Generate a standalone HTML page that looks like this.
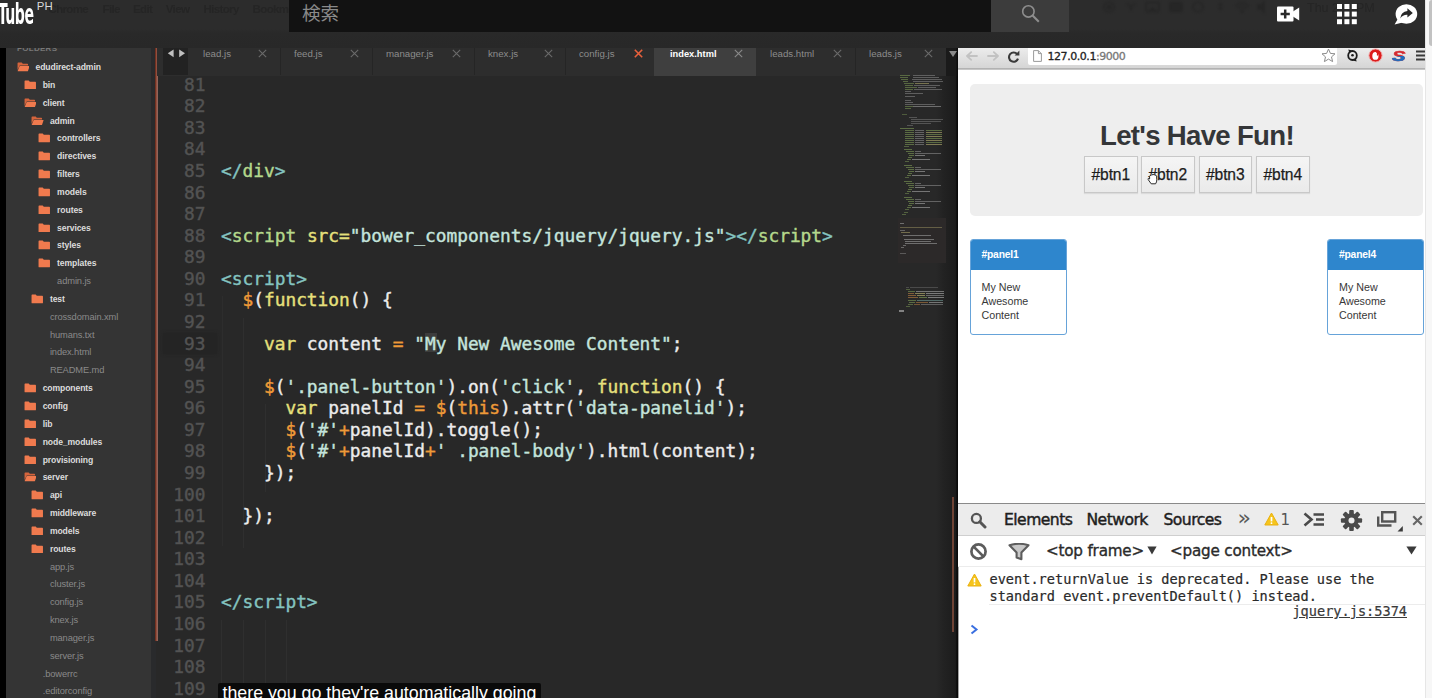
<!DOCTYPE html>
<html lang="ja">
<head>
<meta charset="utf-8">
<title>YouTube</title>
<style>
*{box-sizing:border-box;margin:0;padding:0}
html,body{width:1432px;height:698px;overflow:hidden;background:#282828}
body{position:relative;font-family:"Liberation Sans","Noto Sans CJK JP",sans-serif}
.abs{position:absolute}
/* ---------- video: editor ---------- */
#leftblack{position:absolute;left:0;top:48px;width:6px;height:650px;background:#000}
#sidebar{position:absolute;left:6px;top:48px;width:145px;height:650px;background:#343434}
#sbgap{position:absolute;left:150.6px;top:48px;width:5px;height:650px;background:#292a2c}
#oline{position:absolute;left:154.6px;top:48px;width:3.4px;height:593px;background:linear-gradient(to right,#5e2819,#8a3c2a 40%,#98655a 62%,#8d625a)}
#editor{position:absolute;left:157px;top:48px;width:789px;height:650px;background:#282828}
#edgap{position:absolute;left:936px;top:75px;width:22.4px;height:623px;background:linear-gradient(to right,#282828 0,#222 35%,#1e1e1e 70%,#1c1c1c 88%,#0c0c0c 95%,#080808 100%)}
#edgap2{position:absolute;left:946px;top:48px;width:12.4px;height:27.5px;background:linear-gradient(to right,#1a1a1a 0,#1a1a1a 80%,#080808 100%)}
#oline2{position:absolute;left:951.5px;top:497px;width:2px;height:135px;background:#6e4335}
.fi{position:absolute}
.sd,.sf{position:absolute;font-family:"Liberation Sans",sans-serif;font-size:8.6px;line-height:14px;white-space:nowrap;letter-spacing:-0.1px}
.sd{color:#dcdcdc;font-weight:bold}
.sf{color:#8a8a8a;font-size:9.3px}
#folders{position:absolute;left:17px;top:43.6px;font-size:8px;line-height:10px;color:#777;letter-spacing:.3px;font-weight:bold}
/* tabs */
#tabbar{position:absolute;left:157px;top:48px;width:789px;height:27.5px;background:#2d2d2d}
.tab{position:absolute;top:47px;font-size:9.7px;line-height:14px;color:#8c8c8c;white-space:nowrap;font-family:"Liberation Sans",sans-serif}
.tab.act{color:#fff;font-weight:bold;font-size:9.3px}
.tx{position:absolute}
#tabact{position:absolute;left:654px;top:48px;width:102px;height:27.5px;background:#3f3f3f}
#tabarrows{position:absolute;left:163px;top:48px;width:25px;height:27px;background:#222}
/* code */
.ln,.cl{position:absolute;-webkit-text-stroke:0.4px;font-family:"DejaVu Sans Mono","Liberation Mono",monospace;font-size:17.84px;line-height:21.57px;white-space:pre;height:21.57px}
.ln{left:157px;width:48.5px;text-align:right;color:#535353}
.cl{left:221px;color:#e6e6e6}
.t{color:#84c4c0}.g{color:#b4d88c}.c{color:#a8d4d0}.y{color:#e6e07c}.o{color:#ee9a38}.w{color:#ececec}.s{color:#c4e4dc}
#curline{position:absolute;left:163px;top:333px;width:54px;height:21px;background:#242424;box-shadow:0 0 3px #242424}
#cursor{position:absolute;left:424.5px;top:333px;width:12px;height:19px;background:#3c3c3c}
.guide{position:absolute;width:1px;background:rgba(255,255,255,.035)}
#minimap{position:absolute;left:0;top:0;filter:blur(.45px)}
#minimap i{position:absolute;display:block;height:1.1px}
#mmview{position:absolute;left:898px;top:218px;width:48px;height:45px;background:#2c2929}
#caption{position:absolute;left:218px;top:683.4px;height:20px;padding:0 4.5px;background:#0a0a0a;color:#fff;font-size:17.8px;line-height:21.4px;white-space:nowrap;border-radius:2px;font-family:"Liberation Sans",sans-serif}
/* ---------- video: browser ---------- */
#browser{position:absolute;left:958px;top:48px;width:467px;height:650px;background:#fff}
#ctool{position:absolute;left:958px;top:48px;width:467px;height:21px;background:linear-gradient(#ececec,#d4d4d4)}
#ctoolb{position:absolute;left:958px;top:68px;width:467px;height:2px;background:linear-gradient(#a8a8a8,#d0d0d0)}
#urlbox{position:absolute;left:1028px;top:48px;width:309px;height:16.6px;background:#fff;border-radius:0 0 2px 2px}
#url{position:absolute;left:1047.5px;top:48.8px;font-family:"DejaVu Sans","Liberation Sans",sans-serif;font-size:11px;line-height:16px;color:#222;white-space:nowrap;letter-spacing:-0.45px;-webkit-text-stroke:0.3px}
#url span{color:#777}
#jumbo{position:absolute;left:970px;top:84px;width:453.2px;height:132px;background:#eeeeee;border-radius:5px}
#h1{position:absolute;left:970px;top:118.6px;width:454px;text-align:center;font-size:27.6px;line-height:34px;font-weight:bold;color:#343638;font-family:"Liberation Sans",sans-serif;white-space:nowrap;letter-spacing:-0.7px}
.btn{position:absolute;top:156px;width:53.500px;height:37px;border:1px solid #c8c8c8;background:#efefef;font-size:15.6px;line-height:35px;text-align:center;color:#1c1c1c;letter-spacing:-0.1px;-webkit-text-stroke:.25px;background:linear-gradient(#f5f5f5,#eaeaea);box-shadow:0 1px 1px rgba(0,0,0,.08);font-family:"Liberation Sans",sans-serif;white-space:nowrap}
.panel{position:absolute;top:238.5px;width:97px;height:96.6px;border:1px solid #66a3d9;border-radius:3px;background:#fff;overflow:hidden}
.ph{position:absolute;left:0;top:0;width:100%;height:30px;background:#2e86cd}
.pt{position:absolute;left:11px;top:9px;font-size:10.3px;line-height:12px;font-weight:bold;color:#fff;font-family:"Liberation Sans",sans-serif;letter-spacing:-0.2px}
.pb{position:absolute;left:11px;top:40.5px;font-size:10.7px;line-height:14.1px;color:#383838;font-family:"Liberation Sans",sans-serif}
/* devtools */
#dtline{position:absolute;left:958px;top:503px;width:467px;height:1px;background:#8a8a8a}
#dtbar{position:absolute;left:958px;top:504px;width:467px;height:32px;background:#ececec;border-bottom:1px solid #cfcfcf}
.dtt{position:absolute;top:509px;font-family:"DejaVu Sans","Liberation Sans",sans-serif;font-size:15.6px;line-height:22px;color:#1e1e1e;white-space:nowrap;letter-spacing:-0.55px;-webkit-text-stroke:0.45px}
#dtfilter{position:absolute;left:958px;top:536px;width:467px;height:30.5px;background:#fff;border-bottom:1px solid #ececec}
.dtf{position:absolute;top:540px;font-family:"DejaVu Sans","Liberation Sans",sans-serif;font-size:15.2px;line-height:22px;color:#2a2a2a;white-space:nowrap;letter-spacing:-0.2px;-webkit-text-stroke:0.35px}
.cm{-webkit-text-stroke:.2px;position:absolute;left:989.5px;font-family:"DejaVu Sans Mono","Liberation Mono",monospace;font-size:13.6px;line-height:16.5px;color:#2a2a2a;white-space:pre}
#cmsep{position:absolute;left:989px;top:604px;width:436px;height:1px;background:#ececec}
#vscroll{position:absolute;left:1425px;top:0;width:7px;height:698px;background:#f7f7f7;border-left:1px solid #e6e6e6}
#vthumb{position:absolute;left:1429px;top:0;width:3px;height:46px;background:#c2c2c2;border-radius:3px 0 0 3px}
/* ---------- youtube header ---------- */
#yth{position:absolute;left:0;top:0;width:1425px;height:48px;background:linear-gradient(#2c2c2c 0,#2c2c2c 29px,#292929 33px,#282828 48px)}
#ytsearch{position:absolute;left:289px;top:0;width:702px;height:32px;background:#121212}
#ytsbtn{position:absolute;left:991px;top:0;width:78px;height:32px;background:#3c3c3c}
#ytph{position:absolute;left:36.8px;top:0.2px;font-size:11.4px;line-height:12px;color:#d8d8d8;font-family:"Liberation Sans",sans-serif}
#yttube{position:absolute;left:-2px;top:-2.2px;font-family:"DejaVu Sans Condensed","DejaVu Sans","Liberation Sans",sans-serif;font-weight:bold;font-size:29px;line-height:32px;color:#fff;transform:scaleX(.54);transform-origin:0 0;white-space:nowrap;letter-spacing:-1px}
#ytq{position:absolute;left:302px;top:2px;font-size:18.6px;line-height:24px;color:#8a8a8a;font-family:"Liberation Sans","Noto Sans CJK JP",sans-serif;white-space:nowrap}
.ghost{position:absolute;top:1.5px;font-size:11.6px;line-height:14px;letter-spacing:-0.7px;color:#252525;filter:blur(.7px);font-family:"Liberation Sans",sans-serif;font-weight:bold;white-space:nowrap}
</style>
</head>
<body>
<svg width="0" height="0" style="position:absolute">
<defs>
<g id="fc"><path d="M0.6 1.4Q0.6 0.6 1.4 0.6H5.2L6.4 2H12.4Q13.2 2 13.2 2.8V9.8Q13.2 10.6 12.4 10.6H1.4Q0.6 10.6 0.6 9.8Z" fill="#f07a4e"/></g>
<g id="fo"><path d="M0.6 1.4Q0.6 0.6 1.4 0.6H5.2L6.4 2H11.4Q12.2 2 12.2 2.8V4H3L0.6 9Z" fill="#d5643c"/><path d="M3 4.6H13.6Q14 4.6 13.8 5.2L12.2 10Q12 10.6 11.4 10.6H1.2Q0.5 10.6 0.8 10Z" fill="#f07a4e"/></g>
</defs>
</svg>

<!-- ================= EDITOR (video) ================= -->
<div id="leftblack"></div>
<div id="sidebar"></div>
<div id="sbgap"></div>
<div id="editor"></div>
<div id="oline"></div>
<div id="edgap"></div>
<div id="oline2"></div>
<div id="folders">FOLDERS</div>
<svg class="fi" style="left:16.6px;top:62.0px" width="12.7" height="9.7" viewBox="0 0 14 11" preserveAspectRatio="none"><use href="#fo"/></svg>
<div class="sd" style="left:35.5px;top:60.0px">edudirect-admin</div>
<svg class="fi" style="left:23.8px;top:79.8px" width="12.7" height="9.7" viewBox="0 0 14 11" preserveAspectRatio="none"><use href="#fc"/></svg>
<div class="sd" style="left:42.7px;top:77.8px">bin</div>
<svg class="fi" style="left:23.8px;top:97.7px" width="12.7" height="9.7" viewBox="0 0 14 11" preserveAspectRatio="none"><use href="#fo"/></svg>
<div class="sd" style="left:42.7px;top:95.7px">client</div>
<svg class="fi" style="left:31.0px;top:115.5px" width="12.7" height="9.7" viewBox="0 0 14 11" preserveAspectRatio="none"><use href="#fo"/></svg>
<div class="sd" style="left:49.9px;top:113.5px">admin</div>
<svg class="fi" style="left:38.2px;top:133.4px" width="12.7" height="9.7" viewBox="0 0 14 11" preserveAspectRatio="none"><use href="#fc"/></svg>
<div class="sd" style="left:57.1px;top:131.4px">controllers</div>
<svg class="fi" style="left:38.2px;top:151.2px" width="12.7" height="9.7" viewBox="0 0 14 11" preserveAspectRatio="none"><use href="#fc"/></svg>
<div class="sd" style="left:57.1px;top:149.2px">directives</div>
<svg class="fi" style="left:38.2px;top:169.0px" width="12.7" height="9.7" viewBox="0 0 14 11" preserveAspectRatio="none"><use href="#fc"/></svg>
<div class="sd" style="left:57.1px;top:167.0px">filters</div>
<svg class="fi" style="left:38.2px;top:186.9px" width="12.7" height="9.7" viewBox="0 0 14 11" preserveAspectRatio="none"><use href="#fc"/></svg>
<div class="sd" style="left:57.1px;top:184.9px">models</div>
<svg class="fi" style="left:38.2px;top:204.7px" width="12.7" height="9.7" viewBox="0 0 14 11" preserveAspectRatio="none"><use href="#fc"/></svg>
<div class="sd" style="left:57.1px;top:202.7px">routes</div>
<svg class="fi" style="left:38.2px;top:222.6px" width="12.7" height="9.7" viewBox="0 0 14 11" preserveAspectRatio="none"><use href="#fc"/></svg>
<div class="sd" style="left:57.1px;top:220.6px">services</div>
<svg class="fi" style="left:38.2px;top:240.4px" width="12.7" height="9.7" viewBox="0 0 14 11" preserveAspectRatio="none"><use href="#fc"/></svg>
<div class="sd" style="left:57.1px;top:238.4px">styles</div>
<svg class="fi" style="left:38.2px;top:258.2px" width="12.7" height="9.7" viewBox="0 0 14 11" preserveAspectRatio="none"><use href="#fc"/></svg>
<div class="sd" style="left:57.1px;top:256.2px">templates</div>
<div class="sf" style="left:57.1px;top:274.1px">admin.js</div>
<svg class="fi" style="left:31.0px;top:293.9px" width="12.7" height="9.7" viewBox="0 0 14 11" preserveAspectRatio="none"><use href="#fc"/></svg>
<div class="sd" style="left:49.9px;top:291.9px">test</div>
<div class="sf" style="left:49.9px;top:309.8px">crossdomain.xml</div>
<div class="sf" style="left:49.9px;top:327.6px">humans.txt</div>
<div class="sf" style="left:49.9px;top:345.4px">index.html</div>
<div class="sf" style="left:49.9px;top:363.3px">README.md</div>
<svg class="fi" style="left:23.8px;top:383.1px" width="12.7" height="9.7" viewBox="0 0 14 11" preserveAspectRatio="none"><use href="#fc"/></svg>
<div class="sd" style="left:42.7px;top:381.1px">components</div>
<svg class="fi" style="left:23.8px;top:401.0px" width="12.7" height="9.7" viewBox="0 0 14 11" preserveAspectRatio="none"><use href="#fc"/></svg>
<div class="sd" style="left:42.7px;top:399.0px">config</div>
<svg class="fi" style="left:23.8px;top:418.8px" width="12.7" height="9.7" viewBox="0 0 14 11" preserveAspectRatio="none"><use href="#fc"/></svg>
<div class="sd" style="left:42.7px;top:416.8px">lib</div>
<svg class="fi" style="left:23.8px;top:436.6px" width="12.7" height="9.7" viewBox="0 0 14 11" preserveAspectRatio="none"><use href="#fc"/></svg>
<div class="sd" style="left:42.7px;top:434.6px">node_modules</div>
<svg class="fi" style="left:23.8px;top:454.5px" width="12.7" height="9.7" viewBox="0 0 14 11" preserveAspectRatio="none"><use href="#fc"/></svg>
<div class="sd" style="left:42.7px;top:452.5px">provisioning</div>
<svg class="fi" style="left:23.8px;top:472.3px" width="12.7" height="9.7" viewBox="0 0 14 11" preserveAspectRatio="none"><use href="#fo"/></svg>
<div class="sd" style="left:42.7px;top:470.3px">server</div>
<svg class="fi" style="left:31.0px;top:490.2px" width="12.7" height="9.7" viewBox="0 0 14 11" preserveAspectRatio="none"><use href="#fc"/></svg>
<div class="sd" style="left:49.9px;top:488.2px">api</div>
<svg class="fi" style="left:31.0px;top:508.0px" width="12.7" height="9.7" viewBox="0 0 14 11" preserveAspectRatio="none"><use href="#fc"/></svg>
<div class="sd" style="left:49.9px;top:506.0px">middleware</div>
<svg class="fi" style="left:31.0px;top:525.8px" width="12.7" height="9.7" viewBox="0 0 14 11" preserveAspectRatio="none"><use href="#fc"/></svg>
<div class="sd" style="left:49.9px;top:523.8px">models</div>
<svg class="fi" style="left:31.0px;top:543.7px" width="12.7" height="9.7" viewBox="0 0 14 11" preserveAspectRatio="none"><use href="#fc"/></svg>
<div class="sd" style="left:49.9px;top:541.7px">routes</div>
<div class="sf" style="left:49.9px;top:559.5px">app.js</div>
<div class="sf" style="left:49.9px;top:577.4px">cluster.js</div>
<div class="sf" style="left:49.9px;top:595.2px">config.js</div>
<div class="sf" style="left:49.9px;top:613.0px">knex.js</div>
<div class="sf" style="left:49.9px;top:630.9px">manager.js</div>
<div class="sf" style="left:49.9px;top:648.7px">server.js</div>
<div class="sf" style="left:42.7px;top:666.6px">.bowerrc</div>
<div class="sf" style="left:42.7px;top:684.4px">.editorconfig</div>

<div id="tabbar"></div>
<div id="tabact"></div>
<div class="abs" style="left:280px;top:48px;width:1px;height:27px;background:#252525"></div><div class="abs" style="left:372px;top:48px;width:1px;height:27px;background:#252525"></div><div class="abs" style="left:474px;top:48px;width:1px;height:27px;background:#252525"></div><div class="abs" style="left:565px;top:48px;width:1px;height:27px;background:#252525"></div><div class="abs" style="left:855px;top:48px;width:1px;height:27px;background:#252525"></div>
<div id="tabarrows"></div>
<svg class="abs" style="left:166.5px;top:49px" width="19" height="9" viewBox="0 0 19 9"><path d="M6.6 0.4V8.2L0.8 4.3Z" fill="#c0c0c0"/><path d="M12.2 0.4V8.2L18 4.3Z" fill="#c0c0c0"/></svg>
<div class="tab" style="left:203px">lead.js</div>
<svg class="tx" style="left:257.5px;top:49.3px" width="9" height="9" viewBox="0 0 9 9"><path d="M0.8 0.8L8.2 8.2M8.2 0.8L0.8 8.2" stroke="#6a6a6a" stroke-width="1.1" fill="none"/></svg>
<div class="tab" style="left:294px">feed.js</div>
<svg class="tx" style="left:349.5px;top:49.3px" width="9" height="9" viewBox="0 0 9 9"><path d="M0.8 0.8L8.2 8.2M8.2 0.8L0.8 8.2" stroke="#6a6a6a" stroke-width="1.1" fill="none"/></svg>
<div class="tab" style="left:386px">manager.js</div>
<svg class="tx" style="left:451.5px;top:49.3px" width="9" height="9" viewBox="0 0 9 9"><path d="M0.8 0.8L8.2 8.2M8.2 0.8L0.8 8.2" stroke="#6a6a6a" stroke-width="1.1" fill="none"/></svg>
<div class="tab" style="left:488px">knex.js</div>
<svg class="tx" style="left:543.5px;top:49.3px" width="9" height="9" viewBox="0 0 9 9"><path d="M0.8 0.8L8.2 8.2M8.2 0.8L0.8 8.2" stroke="#6a6a6a" stroke-width="1.1" fill="none"/></svg>
<div class="tab" style="left:579px">config.js</div>
<svg class="tx" style="left:633.5px;top:49.3px" width="9" height="9" viewBox="0 0 9 9"><path d="M0.8 0.8L8.2 8.2M8.2 0.8L0.8 8.2" stroke="#e8603c" stroke-width="1.6" fill="none"/></svg>
<div class="tab act" style="left:670px">index.html</div>
<svg class="tx" style="left:733.5px;top:49.3px" width="9" height="9" viewBox="0 0 9 9"><path d="M0.8 0.8L8.2 8.2M8.2 0.8L0.8 8.2" stroke="#8a8a8a" stroke-width="1.1" fill="none"/></svg>
<div class="tab" style="left:770px">leads.html</div>
<svg class="tx" style="left:832.5px;top:49.3px" width="9" height="9" viewBox="0 0 9 9"><path d="M0.8 0.8L8.2 8.2M8.2 0.8L0.8 8.2" stroke="#6a6a6a" stroke-width="1.1" fill="none"/></svg>
<div class="tab" style="left:869px">leads.js</div>
<svg class="tx" style="left:923.5px;top:49.3px" width="9" height="9" viewBox="0 0 9 9"><path d="M0.8 0.8L8.2 8.2M8.2 0.8L0.8 8.2" stroke="#6a6a6a" stroke-width="1.1" fill="none"/></svg>
<div id="edgap2"></div>
<svg class="abs" style="left:947.5px;top:50px" width="10" height="8" viewBox="0 0 10 8"><path d="M1 1H9L5 7Z" fill="#8a8a8a"/></svg>

<div id="curline"></div>
<div id="cursor"></div>
<div class="guide" style="left:222px;top:296px;height:250px;opacity:.7"></div>
<div class="guide" style="left:243px;top:318px;height:230px"></div>
<div class="guide" style="left:265px;top:404px;height:88px"></div>
<div class="guide" style="left:221px;top:620px;height:78px"></div>
<div class="guide" style="left:243px;top:620px;height:78px"></div>
<div class="guide" style="left:265px;top:620px;height:78px"></div>
<div class="guide" style="left:286px;top:620px;height:78px"></div>
<div class="ln" style="top:73.70px">81</div>
<div class="ln" style="top:95.27px">82</div>
<div class="ln" style="top:116.84px">83</div>
<div class="ln" style="top:138.41px">84</div>
<div class="ln" style="top:159.98px">85</div>
<div class="cl" style="top:159.98px"><span class="t">&lt;/</span><span class="g">div</span><span class="t">&gt;</span></div>
<div class="ln" style="top:181.55px">86</div>
<div class="ln" style="top:203.12px">87</div>
<div class="ln" style="top:224.69px">88</div>
<div class="cl" style="top:224.69px"><span class="t">&lt;</span><span class="g">script</span><span class="w"> </span><span class="y">src</span><span class="y">=</span><span class="s">&quot;bower_components/jquery/jquery.js&quot;</span><span class="t">&gt;&lt;/</span><span class="g">script</span><span class="t">&gt;</span></div>
<div class="ln" style="top:246.26px">89</div>
<div class="ln" style="top:267.83px">90</div>
<div class="cl" style="top:267.83px"><span class="t">&lt;script&gt;</span></div>
<div class="ln" style="top:289.40px">91</div>
<div class="cl" style="top:289.40px"><span class="w">  </span><span class="o">$</span><span class="w">(</span><span class="y">function</span><span class="w">() {</span></div>
<div class="ln" style="top:310.97px">92</div>
<div class="ln" style="top:332.54px">93</div>
<div class="cl" style="top:332.54px"><span class="w">    </span><span class="y">var</span><span class="w"> content </span><span class="o">=</span><span class="w"> </span><span class="s">&quot;My New Awesome Content&quot;</span><span class="w">;</span></div>
<div class="ln" style="top:354.11px">94</div>
<div class="ln" style="top:375.68px">95</div>
<div class="cl" style="top:375.68px"><span class="w">    </span><span class="o">$</span><span class="w">(</span><span class="s">&#x27;.panel-button&#x27;</span><span class="w">).on(</span><span class="s">&#x27;click&#x27;</span><span class="w">, </span><span class="y">function</span><span class="w">() {</span></div>
<div class="ln" style="top:397.25px">96</div>
<div class="cl" style="top:397.25px"><span class="w">      </span><span class="y">var</span><span class="w"> panelId </span><span class="o">=</span><span class="w"> </span><span class="o">$</span><span class="w">(</span><span class="o">this</span><span class="w">).attr(</span><span class="s">&#x27;data-panelid&#x27;</span><span class="w">);</span></div>
<div class="ln" style="top:418.82px">97</div>
<div class="cl" style="top:418.82px"><span class="w">      </span><span class="o">$</span><span class="w">(</span><span class="s">&#x27;#&#x27;</span><span class="o">+</span><span class="w">panelId).toggle();</span></div>
<div class="ln" style="top:440.39px">98</div>
<div class="cl" style="top:440.39px"><span class="w">      </span><span class="o">$</span><span class="w">(</span><span class="s">&#x27;#&#x27;</span><span class="o">+</span><span class="w">panelId</span><span class="o">+</span><span class="s">&#x27; .panel-body&#x27;</span><span class="w">).html(content);</span></div>
<div class="ln" style="top:461.96px">99</div>
<div class="cl" style="top:461.96px"><span class="w">    });</span></div>
<div class="ln" style="top:483.53px">100</div>
<div class="ln" style="top:505.10px">101</div>
<div class="cl" style="top:505.10px"><span class="w">  });</span></div>
<div class="ln" style="top:526.67px">102</div>
<div class="ln" style="top:548.24px">103</div>
<div class="ln" style="top:569.81px">104</div>
<div class="ln" style="top:591.38px">105</div>
<div class="cl" style="top:591.38px"><span class="t">&lt;/script&gt;</span></div>
<div class="ln" style="top:612.95px">106</div>
<div class="ln" style="top:634.52px">107</div>
<div class="ln" style="top:656.09px">108</div>
<div class="ln" style="top:677.66px">109</div>
<div id="mmview"></div>
<div id="minimap">
<i style="left:900.0px;top:75.0px;width:10.0px;background:#7d9a55;opacity:0.55"></i>
<i style="left:913.0px;top:75.0px;width:22.0px;background:#8a8a8a;opacity:0.55"></i>
<i style="left:900.0px;top:77.0px;width:8.0px;background:#7d9a55;opacity:0.55"></i>
<i style="left:913.0px;top:77.0px;width:26.0px;background:#8a8a8a;opacity:0.55"></i>
<i style="left:901.0px;top:79.1px;width:7.0px;background:#7d9a55;opacity:0.55"></i>
<i style="left:912.0px;top:79.1px;width:30.0px;background:#8a8a8a;opacity:0.55"></i>
<i style="left:903.0px;top:81.1px;width:5.0px;background:#7d9a55;opacity:0.55"></i>
<i style="left:913.0px;top:81.1px;width:30.0px;background:#8a8a8a;opacity:0.55"></i>
<i style="left:904.0px;top:83.2px;width:10.0px;background:#7d9a55;opacity:0.55"></i>
<i style="left:915.0px;top:83.2px;width:14.0px;background:#b8b070;opacity:0.55"></i>
<i style="left:905.0px;top:85.2px;width:8.0px;background:#7d9a55;opacity:0.55"></i>
<i style="left:914.0px;top:85.2px;width:26.0px;background:#8a8a8a;opacity:0.55"></i>
<i style="left:905.0px;top:87.3px;width:12.0px;background:#7d9a55;opacity:0.55"></i>
<i style="left:918.0px;top:87.3px;width:18.0px;background:#8a8a8a;opacity:0.55"></i>
<i style="left:905.0px;top:89.3px;width:8.0px;background:#7d9a55;opacity:0.55"></i>
<i style="left:914.0px;top:89.3px;width:28.0px;background:#8a8a8a;opacity:0.55"></i>
<i style="left:905.0px;top:91.4px;width:6.0px;background:#8a8a8a;opacity:0.55"></i>
<i style="left:905.0px;top:93.4px;width:18.0px;background:#8a8a8a;opacity:0.55"></i>
<i style="left:905.0px;top:95.5px;width:10.0px;background:#8a8a8a;opacity:0.55"></i>
<i style="left:905.0px;top:99.6px;width:6.0px;background:#8a8a8a;opacity:0.55"></i>
<i style="left:905.0px;top:101.6px;width:8.0px;background:#8a8a8a;opacity:0.55"></i>
<i style="left:905.0px;top:103.7px;width:30.0px;background:#8a8a8a;opacity:0.55"></i>
<i style="left:905.0px;top:105.7px;width:8.0px;background:#7d9a55;opacity:0.55"></i>
<i style="left:913.0px;top:105.7px;width:28.0px;background:#a8a8a8;opacity:0.55"></i>
<i style="left:905.0px;top:107.8px;width:6.0px;background:#7d9a55;opacity:0.55"></i>
<i style="left:902.0px;top:114.0px;width:5.0px;background:#7d9a55;opacity:0.45"></i>
<i style="left:909.0px;top:116.5px;width:8.0px;background:#8a8a8a;opacity:0.45"></i>
<i style="left:911.0px;top:118.5px;width:32.0px;background:#8a8a8a;opacity:0.45"></i>
<i style="left:911.0px;top:120.5px;width:30.0px;background:#8a8a8a;opacity:0.45"></i>
<i style="left:911.0px;top:122.5px;width:20.0px;background:#8a8a8a;opacity:0.45"></i>
<i style="left:907.0px;top:124.5px;width:6.0px;background:#8a8a8a;opacity:0.45"></i>
<i style="left:900.0px;top:128.0px;width:14.0px;background:#7d9a55;opacity:0.6"></i>
<i style="left:905.0px;top:130.0px;width:9.0px;background:#7d9a55;opacity:0.6"></i>
<i style="left:915.0px;top:130.0px;width:9.0px;background:#8a8a8a;opacity:0.6"></i>
<i style="left:926.0px;top:130.0px;width:16.0px;background:#7d9a55;opacity:0.6"></i>
<i style="left:905.0px;top:132.0px;width:9.0px;background:#7d9a55;opacity:0.6"></i>
<i style="left:915.0px;top:132.0px;width:9.0px;background:#8a8a8a;opacity:0.6"></i>
<i style="left:926.0px;top:132.0px;width:16.0px;background:#b8b070;opacity:0.6"></i>
<i style="left:905.0px;top:134.0px;width:9.0px;background:#7d9a55;opacity:0.6"></i>
<i style="left:915.0px;top:134.0px;width:9.0px;background:#8a8a8a;opacity:0.6"></i>
<i style="left:926.0px;top:134.0px;width:16.0px;background:#7d9a55;opacity:0.6"></i>
<i style="left:905.0px;top:136.0px;width:9.0px;background:#7d9a55;opacity:0.6"></i>
<i style="left:915.0px;top:136.0px;width:9.0px;background:#8a8a8a;opacity:0.6"></i>
<i style="left:926.0px;top:136.0px;width:16.0px;background:#b8b070;opacity:0.6"></i>
<i style="left:905.0px;top:138.0px;width:9.0px;background:#7d9a55;opacity:0.6"></i>
<i style="left:915.0px;top:138.0px;width:9.0px;background:#8a8a8a;opacity:0.6"></i>
<i style="left:926.0px;top:138.0px;width:16.0px;background:#7d9a55;opacity:0.6"></i>
<i style="left:905.0px;top:140.0px;width:9.0px;background:#7d9a55;opacity:0.6"></i>
<i style="left:915.0px;top:140.0px;width:9.0px;background:#8a8a8a;opacity:0.6"></i>
<i style="left:926.0px;top:140.0px;width:16.0px;background:#b8b070;opacity:0.6"></i>
<i style="left:905.0px;top:142.0px;width:9.0px;background:#7d9a55;opacity:0.6"></i>
<i style="left:915.0px;top:142.0px;width:9.0px;background:#8a8a8a;opacity:0.6"></i>
<i style="left:926.0px;top:142.0px;width:16.0px;background:#7d9a55;opacity:0.6"></i>
<i style="left:905.0px;top:144.0px;width:9.0px;background:#7d9a55;opacity:0.6"></i>
<i style="left:915.0px;top:144.0px;width:9.0px;background:#8a8a8a;opacity:0.6"></i>
<i style="left:926.0px;top:144.0px;width:16.0px;background:#b8b070;opacity:0.6"></i>
<i style="left:904.0px;top:146.0px;width:5.0px;background:#7d9a55;opacity:0.5"></i>
<i style="left:904.0px;top:148.5px;width:8.0px;background:#7d9a55;opacity:0.6"></i>
<i style="left:906.0px;top:150.5px;width:8.0px;background:#7d9a55;opacity:0.6"></i>
<i style="left:915.0px;top:150.5px;width:6.0px;background:#8a8a8a;opacity:0.6"></i>
<i style="left:908.0px;top:152.5px;width:6.0px;background:#7d9a55;opacity:0.6"></i>
<i style="left:915.0px;top:152.5px;width:26.0px;background:#8a8a8a;opacity:0.6"></i>
<i style="left:909.0px;top:154.5px;width:5.0px;background:#7d9a55;opacity:0.6"></i>
<i style="left:915.0px;top:154.5px;width:10.0px;background:#a8a8a8;opacity:0.6"></i>
<i style="left:908.0px;top:156.5px;width:4.0px;background:#7d9a55;opacity:0.6"></i>
<i style="left:907.0px;top:158.5px;width:4.0px;background:#7d9a55;opacity:0.6"></i>
<i style="left:912.0px;top:158.5px;width:18.0px;background:#a8a8a8;opacity:0.6"></i>
<i style="left:905.0px;top:160.5px;width:4.0px;background:#7d9a55;opacity:0.5"></i>
<i style="left:904.0px;top:164.5px;width:8.0px;background:#7d9a55;opacity:0.6"></i>
<i style="left:906.0px;top:166.5px;width:8.0px;background:#7d9a55;opacity:0.6"></i>
<i style="left:915.0px;top:166.5px;width:6.0px;background:#8a8a8a;opacity:0.6"></i>
<i style="left:908.0px;top:168.5px;width:6.0px;background:#7d9a55;opacity:0.6"></i>
<i style="left:915.0px;top:168.5px;width:26.0px;background:#8a8a8a;opacity:0.6"></i>
<i style="left:909.0px;top:170.5px;width:5.0px;background:#7d9a55;opacity:0.6"></i>
<i style="left:915.0px;top:170.5px;width:10.0px;background:#a8a8a8;opacity:0.6"></i>
<i style="left:908.0px;top:172.5px;width:4.0px;background:#7d9a55;opacity:0.6"></i>
<i style="left:907.0px;top:174.5px;width:4.0px;background:#7d9a55;opacity:0.6"></i>
<i style="left:912.0px;top:174.5px;width:18.0px;background:#a8a8a8;opacity:0.6"></i>
<i style="left:905.0px;top:176.5px;width:4.0px;background:#7d9a55;opacity:0.5"></i>
<i style="left:904.0px;top:180.5px;width:8.0px;background:#7d9a55;opacity:0.6"></i>
<i style="left:906.0px;top:182.5px;width:8.0px;background:#7d9a55;opacity:0.6"></i>
<i style="left:915.0px;top:182.5px;width:6.0px;background:#8a8a8a;opacity:0.6"></i>
<i style="left:908.0px;top:184.5px;width:6.0px;background:#7d9a55;opacity:0.6"></i>
<i style="left:915.0px;top:184.5px;width:26.0px;background:#8a8a8a;opacity:0.6"></i>
<i style="left:909.0px;top:186.5px;width:5.0px;background:#7d9a55;opacity:0.6"></i>
<i style="left:915.0px;top:186.5px;width:10.0px;background:#a8a8a8;opacity:0.6"></i>
<i style="left:908.0px;top:188.5px;width:4.0px;background:#7d9a55;opacity:0.6"></i>
<i style="left:907.0px;top:190.5px;width:4.0px;background:#7d9a55;opacity:0.6"></i>
<i style="left:912.0px;top:190.5px;width:18.0px;background:#a8a8a8;opacity:0.6"></i>
<i style="left:905.0px;top:192.5px;width:4.0px;background:#7d9a55;opacity:0.5"></i>
<i style="left:904.0px;top:196.5px;width:8.0px;background:#7d9a55;opacity:0.6"></i>
<i style="left:906.0px;top:198.5px;width:8.0px;background:#7d9a55;opacity:0.6"></i>
<i style="left:915.0px;top:198.5px;width:6.0px;background:#8a8a8a;opacity:0.6"></i>
<i style="left:908.0px;top:200.5px;width:6.0px;background:#7d9a55;opacity:0.6"></i>
<i style="left:915.0px;top:200.5px;width:26.0px;background:#8a8a8a;opacity:0.6"></i>
<i style="left:909.0px;top:202.5px;width:5.0px;background:#7d9a55;opacity:0.6"></i>
<i style="left:915.0px;top:202.5px;width:10.0px;background:#a8a8a8;opacity:0.6"></i>
<i style="left:908.0px;top:204.5px;width:4.0px;background:#7d9a55;opacity:0.6"></i>
<i style="left:907.0px;top:206.5px;width:4.0px;background:#7d9a55;opacity:0.6"></i>
<i style="left:912.0px;top:206.5px;width:18.0px;background:#a8a8a8;opacity:0.6"></i>
<i style="left:905.0px;top:208.5px;width:4.0px;background:#7d9a55;opacity:0.5"></i>
<i style="left:904.0px;top:211.5px;width:4.0px;background:#7d9a55;opacity:0.5"></i>
<i style="left:902.0px;top:214.0px;width:4.0px;background:#7d9a55;opacity:0.5"></i>
<i style="left:900.0px;top:222.5px;width:4.0px;background:#a8a8a8;opacity:0.55"></i>
<i style="left:900.0px;top:227.0px;width:42.0px;background:#b8b070;opacity:0.4"></i>
<i style="left:900.0px;top:230.0px;width:5.0px;background:#a8a8a8;opacity:0.45"></i>
<i style="left:901.0px;top:232.0px;width:9.0px;background:#b8b070;opacity:0.5"></i>
<i style="left:903.0px;top:235.0px;width:28.0px;background:#a8a8a8;opacity:0.55"></i>
<i style="left:904.0px;top:238.5px;width:30.0px;background:#a8a8a8;opacity:0.55"></i>
<i style="left:905.0px;top:240.5px;width:26.0px;background:#a8a8a8;opacity:0.55"></i>
<i style="left:905.0px;top:242.5px;width:32.0px;background:#a8a8a8;opacity:0.55"></i>
<i style="left:903.0px;top:244.5px;width:3.0px;background:#a8a8a8;opacity:0.5"></i>
<i style="left:901.0px;top:247.0px;width:3.0px;background:#a8a8a8;opacity:0.5"></i>
<i style="left:900.0px;top:252.5px;width:6.0px;background:#8a8a8a;opacity:0.5"></i>
<i style="left:906.0px;top:286.5px;width:3.0px;background:#8a8a8a;opacity:0.35"></i>
<i style="left:910.0px;top:286.5px;width:28.0px;background:#8a8a8a;opacity:0.35"></i>
<i style="left:906.0px;top:288.5px;width:4.0px;background:#7d9a55;opacity:0.5"></i>
<i style="left:908.0px;top:290.5px;width:7.0px;background:#7d9a55;opacity:0.6"></i>
<i style="left:916.0px;top:290.5px;width:28.0px;background:#a8a8a8;opacity:0.6"></i>
<i style="left:908.0px;top:292.5px;width:6.0px;background:#b07a40;opacity:0.65"></i>
<i style="left:915.0px;top:292.5px;width:10.0px;background:#b8b070;opacity:0.65"></i>
<i style="left:926.0px;top:292.5px;width:18.0px;background:#a8a8a8;opacity:0.65"></i>
<i style="left:908.0px;top:294.5px;width:8.0px;background:#b07a40;opacity:0.65"></i>
<i style="left:917.0px;top:294.5px;width:8.0px;background:#b8b070;opacity:0.65"></i>
<i style="left:926.0px;top:294.5px;width:18.0px;background:#8a8a8a;opacity:0.65"></i>
<i style="left:908.0px;top:296.5px;width:10.0px;background:#b07a40;opacity:0.65"></i>
<i style="left:919.0px;top:296.5px;width:8.0px;background:#7d9a55;opacity:0.65"></i>
<i style="left:928.0px;top:296.5px;width:16.0px;background:#a8a8a8;opacity:0.65"></i>
<i style="left:908.0px;top:299.5px;width:8.0px;background:#7d9a55;opacity:0.6"></i>
<i style="left:917.0px;top:299.5px;width:26.0px;background:#6f9a94;opacity:0.6"></i>
<i style="left:909.0px;top:301.5px;width:6.0px;background:#7d9a55;opacity:0.6"></i>
<i style="left:916.0px;top:301.5px;width:12.0px;background:#b07a40;opacity:0.6"></i>
<i style="left:929.0px;top:301.5px;width:14.0px;background:#a8a8a8;opacity:0.6"></i>
<i style="left:908.0px;top:303.5px;width:5.0px;background:#7d9a55;opacity:0.55"></i>
<i style="left:914.0px;top:303.5px;width:6.0px;background:#b07a40;opacity:0.55"></i>
<i style="left:921.0px;top:303.5px;width:22.0px;background:#8a8a8a;opacity:0.55"></i>
<i style="left:906.0px;top:305.5px;width:4.0px;background:#7d9a55;opacity:0.5"></i>
<i style="left:899.0px;top:310.0px;width:5.0px;background:#a8a8a8;opacity:0.7"></i>
<i style="left:899.0px;top:311.0px;width:5.0px;background:#a8a8a8;opacity:0.7"></i>
</div>
<div id="caption">there you go they're automatically going</div>

<!-- ================= BROWSER (video) ================= -->
<div id="browser"></div>
<div id="ctool"></div>
<div id="ctoolb"></div>
<div id="urlbox"></div>
<!-- back / forward / reload -->
<svg class="abs" style="left:965px;top:50px" width="56" height="14" viewBox="0 0 56 14">
<path d="M2 6H12M2 6L6.2 2.200M2 6L6.2 9.8" stroke="#c2c2c2" stroke-width="1.8" fill="none" stroke-linecap="round"/>
<path d="M33 6H23M33 6L28.8 2.200M33 6L28.8 9.8" stroke="#c2c2c2" stroke-width="1.8" fill="none" stroke-linecap="round"/>
<path d="M52.2 4.2A4.6 4.6 0 1 0 53 8.6" stroke="#3a3a3a" stroke-width="2.1" fill="none"/>
<path d="M49.6 5.4H54.4V0.6Z" fill="#3a3a3a"/>
</svg>
<!-- page icon -->
<svg class="abs" style="left:1033px;top:50px" width="9" height="12" viewBox="0 0 9 12"><path d="M0.6 0.6H5.4L8.4 3.6V11.4H0.6Z" fill="#fff" stroke="#9a9a9a" stroke-width="1"/><path d="M5.4 0.6V3.6H8.4" fill="none" stroke="#9a9a9a" stroke-width="1"/></svg>
<div id="url">127.0.0.1<span>:9000</span></div>
<!-- star -->
<svg class="abs" style="left:1321px;top:48px" width="15" height="15" viewBox="0 0 15 15"><path d="M7.5 1L9.4 5.4L14 5.8L10.5 8.9L11.6 13.6L7.5 11.1L3.4 13.6L4.5 8.9L1 5.8L5.6 5.4Z" fill="#fff" stroke="#8c8c8c" stroke-width="1" stroke-linejoin="round"/></svg>
<!-- ext 1 : sync-like -->
<svg class="abs" style="left:1346px;top:49px" width="13" height="13" viewBox="0 0 13 13"><ellipse cx="6.5" cy="6.5" rx="4.3" ry="4.5" fill="none" stroke="#1c1c1c" stroke-width="1.8"/><circle cx="6.5" cy="6.3" r="1.3" fill="#1c1c1c"/><path d="M2.4 0.6L6 1.4L3.4 4.4Z" fill="#1c1c1c"/><path d="M10.6 12.4L7 11.6L9.6 8.600Z" fill="#1c1c1c"/></svg>
<!-- ext 2 : red circle -->
<svg class="abs" style="left:1368px;top:48px" width="15" height="15" viewBox="0 0 15 15"><circle cx="7.5" cy="7.5" r="6.6" fill="#dc1c1c" stroke="#f0b0b0" stroke-width="1"/><ellipse cx="7.4" cy="7.9" rx="3.1" ry="3.9" fill="#fff"/><path d="M8.4 3.6Q10.4 5 9.4 7.4" stroke="#dc1c1c" stroke-width="1.3" fill="none"/></svg>
<!-- ext 3 : S -->
<div class="abs" style="left:1392px;top:47px;font-family:'Liberation Sans',sans-serif;font-weight:bold;font-style:italic;font-size:15px;line-height:18px;color:#d42a30;transform:scaleX(1.35);transform-origin:0 0;-webkit-text-stroke:.5px">S</div>
<div class="abs" style="left:1390px;top:55.7px;width:22px;height:7px;overflow:hidden"><div style="margin-left:2px;margin-top:-8.7px;font-family:'Liberation Sans',sans-serif;font-weight:bold;font-style:italic;font-size:15px;line-height:18px;color:#1e6ec0;transform:scaleX(1.35);transform-origin:0 0;-webkit-text-stroke:.5px">S</div></div>
<!-- hamburger -->
<svg class="abs" style="left:1416px;top:50px" width="9" height="11" viewBox="0 0 9 11"><path d="M0 1.5H9M0 5.5H9M0 9.5H9" stroke="#3a3a3a" stroke-width="1.8"/></svg>

<div id="jumbo"></div>
<div id="h1">Let's Have Fun!</div>
<div class="btn" style="left:1084px">#btn1</div>
<div class="btn" style="left:1141px">#btn2</div>
<div class="btn" style="left:1198.5px">#btn3</div>
<div class="btn" style="left:1256px">#btn4</div>
<!-- hand cursor -->
<svg class="abs" style="left:1146.500px;top:172.600px" width="12" height="12" viewBox="0 0 12 12"><path d="M2.6 3.400Q3 2 4.2 2.400Q4.8 1.2 6 1.800Q7 1 7.8 2Q9.4 1.8 9.6 3.400L9.8 6.800Q9.8 9 8.6 10.800H4.200L1.2 6.600Q0.6 5.4 1.8 5.400L2.6 6Z" fill="#fff" stroke="#2a2a2a" stroke-width="1" stroke-linejoin="round"/></svg>

<div class="panel" style="left:969.5px"><div class="ph"></div><div class="pt">#panel1</div><div class="pb">My New<br>Awesome<br>Content</div></div>
<div class="panel" style="left:1327px"><div class="ph"></div><div class="pt">#panel4</div><div class="pb">My New<br>Awesome<br>Content</div></div>

<!-- devtools -->
<div id="dtline"></div>
<div class="abs" style="left:958.4px;top:504px;width:1px;height:194px;background:#a4a4a4"></div>
<div id="dtbar"></div>
<svg class="abs" style="left:970px;top:512px" width="17" height="17" viewBox="0 0 17 17"><circle cx="6.4" cy="6.4" r="4.5" fill="none" stroke="#555" stroke-width="2.3"/><path d="M9.8 9.8L15 15" stroke="#555" stroke-width="3" stroke-linecap="round"/></svg>
<div class="dtt" style="left:1004px">Elements</div>
<div class="dtt" style="left:1086.5px">Network</div>
<div class="dtt" style="left:1163.5px">Sources</div>
<div class="dtt" style="left:1237.5px;top:507px;color:#5a5a5a;font-size:22px;-webkit-text-stroke:0">»</div>
<svg class="abs" style="left:1264px;top:512px" width="15" height="14" viewBox="0 0 15 14"><path d="M7.5 1L14.2 13H0.8Z" fill="#f6c51c" stroke="#e9b010" stroke-width="1" stroke-linejoin="round"/><path d="M7.5 5V9.4" stroke="#fff" stroke-width="1.7"/><circle cx="7.5" cy="11.2" r="0.9" fill="#fff"/></svg>
<div class="dtt" style="left:1280.5px;color:#555;-webkit-text-stroke:0;font-size:15px">1</div>
<svg class="abs" style="left:1303px;top:512px" width="22" height="15" viewBox="0 0 22 15"><path d="M1.5 1.5L8.5 7.5L1.5 13.5" stroke="#4a4a4a" stroke-width="2.6" fill="none"/><path d="M10.5 2.5H21M13 7.5H21M10.5 12.5H21" stroke="#4a4a4a" stroke-width="2.3"/></svg>
<svg class="abs" style="left:1340px;top:509px" width="23" height="23" viewBox="-11.5 -11.5 23 23"><g fill="#4a4a4a"><circle r="7.2"/><g id="tooth"><rect x="-2.3" y="-10.6" width="4.6" height="5" rx="1"/></g><use href="#tooth" transform="rotate(45)"/><use href="#tooth" transform="rotate(90)"/><use href="#tooth" transform="rotate(135)"/><use href="#tooth" transform="rotate(180)"/><use href="#tooth" transform="rotate(225)"/><use href="#tooth" transform="rotate(270)"/><use href="#tooth" transform="rotate(315)"/></g><circle r="3" fill="#ececec"/></svg>
<svg class="abs" style="left:1377px;top:511px" width="27" height="22" viewBox="0 0 27 22"><rect x="5.2" y="1.2" width="13" height="9.3" fill="#ececec" stroke="#555" stroke-width="2.4"/><path d="M1.2 5.5V14.5H14.5" fill="none" stroke="#555" stroke-width="2.4"/><path d="M25.8 15V20.5H20.5Z" fill="#3a3a3a"/></svg>
<svg class="abs" style="left:1412px;top:515px" width="11" height="11" viewBox="0 0 11 11"><path d="M1.2 1.2L9.8 9.8M9.8 1.2L1.2 9.8" stroke="#666" stroke-width="2.1"/></svg>

<div id="dtfilter"></div>
<svg class="abs" style="left:969px;top:542px" width="19" height="19" viewBox="0 0 19 19"><circle cx="9.5" cy="9.5" r="7.1" fill="none" stroke="#5c5c5c" stroke-width="2.7"/><path d="M4.4 4.4L14.6 14.6" stroke="#5c5c5c" stroke-width="2.7"/></svg>
<svg class="abs" style="left:1008px;top:543px" width="22" height="18" viewBox="0 0 22 18"><path d="M1.5 2.2Q11 -0.6 20.5 2.2L13.4 9.4V16.2L8.6 14.6V9.4Z" fill="#c8c8c8" stroke="#5c5c5c" stroke-width="2.1" stroke-linejoin="round"/></svg>
<div class="dtf" style="left:1046px">&lt;top frame&gt;</div>
<svg class="abs" style="left:1147px;top:546px" width="10" height="9" viewBox="0 0 10 9"><path d="M0.4 0.6H9.6L5 8.6Z" fill="#3a3a3a"/></svg>
<div class="dtf" style="left:1170px">&lt;page context&gt;</div>
<svg class="abs" style="left:1405.5px;top:546px" width="11" height="9" viewBox="0 0 11 9"><path d="M0.4 0.6H10.6L5.5 8.6Z" fill="#3a3a3a"/></svg>

<svg class="abs" style="left:966.5px;top:573px" width="15" height="14" viewBox="0 0 15 14"><path d="M7.5 1L14.2 13H0.8Z" fill="#f6c51c" stroke="#e9b010" stroke-width="1" stroke-linejoin="round"/><path d="M7.5 5V9.4" stroke="#fff" stroke-width="1.7"/><circle cx="7.5" cy="11.2" r="0.9" fill="#fff"/></svg>
<div class="cm" style="top:571px">event.returnValue is deprecated. Please use the
standard event.preventDefault() instead.</div>
<div id="cmsep"></div>
<div class="cm" style="top:603px;left:auto;right:25px;text-decoration:underline;color:#3a3a3a">jquery.js:5374</div>
<svg class="abs" style="left:970px;top:624px" width="9" height="11" viewBox="0 0 9 11"><path d="M1.5 1.5L6.5 5.5L1.5 9.5" fill="none" stroke="#3a6fe0" stroke-width="2"/></svg>

<div id="vscroll"></div>
<div id="vthumb"></div>

<!-- ================= YOUTUBE HEADER ================= -->
<div id="yth"></div>
<div class="ghost" style="left:48.5px">Chrome</div>
<div class="ghost" style="left:102.6px">File</div>
<div class="ghost" style="left:133px">Edit</div>
<div class="ghost" style="left:165.8px">View</div>
<div class="ghost" style="left:203.6px">History</div>
<div class="ghost" style="left:252.6px">Bookm</div>
<svg class="abs" style="left:1080px;top:0;filter:blur(.9px)" width="200" height="20" viewBox="0 0 200 20"><g fill="none" stroke="#262626" stroke-width="1.6"><circle cx="29" cy="7" r="5"/><circle cx="29" cy="7" r="1.6" fill="#262626"/><path d="M46 4Q50 4 51 8Q52 4 56 4M51 8V11"/><rect x="66" y="2.5" width="13" height="9"/><path d="M69 12L72.5 8L76 12" fill="#262626"/><rect x="90" y="2.5" width="12" height="9" rx="1.5" fill="#262626"/><circle cx="118" cy="7" r="5"/><path d="M139 3L142 10M142 3L139 10"/><path d="M155 6Q162 0 169 6M157.5 8.500Q162 4.5 166.5 8.5"/><circle cx="162" cy="11" r="1" fill="#262626"/><path d="M178 5H181L184 2V12L181 9H178Z" fill="#262626"/></g></svg>
<div class="ghost" style="left:1307px;top:1px;font-weight:normal;font-size:12.5px;letter-spacing:0">Thu 2</div>
<div class="ghost" style="left:1356px;top:1px;font-weight:normal;font-size:12.5px;letter-spacing:0">PM</div>
<div id="ytsearch"></div>
<div id="ytsbtn"></div>
<div id="yttube">Tube</div>
<div id="ytph">PH</div>
<div id="ytq">検索</div>
<svg class="abs" style="left:1021px;top:4.2px" width="20" height="20" viewBox="0 0 20 20"><circle cx="7.4" cy="7.4" r="5.7" fill="none" stroke="#8e8e8e" stroke-width="1.6"/><path d="M11.6 11.6L17.8 17.8" stroke="#8e8e8e" stroke-width="2.1"/></svg>
<!-- camera + -->
<svg class="abs" style="left:1277px;top:6px" width="23" height="16" viewBox="0 0 23 16"><rect x="0" y="0.5" width="16.5" height="15" rx="1" fill="#fff"/><path d="M16 5.600L22.2 1.400V14.600L16 10.400Z" fill="#fff"/><path d="M8.2 3.400V12.600M3.6 8H12.8" stroke="#282828" stroke-width="2.5"/></svg>
<!-- grid -->
<svg class="abs" style="left:1337px;top:4px" width="20" height="21" viewBox="0 0 20 21"><g fill="#fff"><rect x="0" y="0" width="5" height="5"/><rect x="7.4" y="0" width="5" height="5"/><rect x="14.8" y="0" width="5" height="5"/><rect x="0" y="7.6" width="5" height="5"/><rect x="7.4" y="7.6" width="5" height="5"/><rect x="14.8" y="7.6" width="5" height="5"/><rect x="0" y="15.2" width="5" height="5"/><rect x="7.4" y="15.2" width="5" height="5"/><rect x="14.8" y="15.2" width="5" height="5"/></g></svg>
<!-- share bubble -->
<svg class="abs" style="left:1393.5px;top:4px" width="24" height="22" viewBox="0 0 24 22"><ellipse cx="12.4" cy="10" rx="10.8" ry="9.8" fill="#fff"/><path d="M3.6 15.2L0.6 20.6L8.6 18.6Z" fill="#fff"/><path d="M13.4 4.2L18.8 9L13.4 13.6V10.8Q8.8 10.6 6.2 14.4Q7 7.6 13.4 7Z" fill="#282828"/></svg>
</body>
</html>
